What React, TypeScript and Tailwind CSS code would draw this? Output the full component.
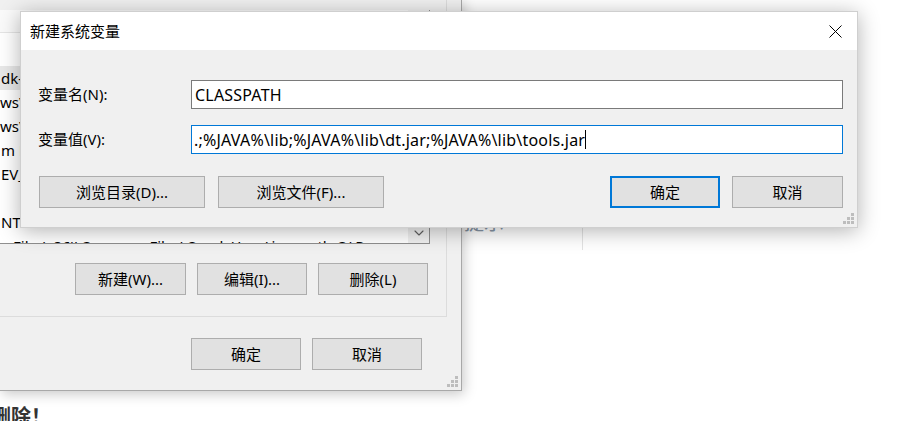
import { ChevronDown } from 'lucide-react'

const ui = "font-['Noto_Sans','Noto_Sans_CJK_SC',sans-serif]"

// values column of the system variable list, clipped at the left edge
const rows = [
  { text: '', pad: 0 },
  { text: 'dk-1.8.0_181', pad: 1, selected: true },
  { text: 'ws\\system32\\cmd.exe', pad: 0 },
  { text: 'ws\\System32\\Drivers\\DriverData', pad: 0 },
  { text: 'm Files\\Java\\jre', pad: 1 },
  { text: 'EV_HOME', pad: 1 },
  { text: '', pad: 0 },
  { text: 'NT', pad: 1 },
  { text: 'File (x86)\\Common Files\\Oracle\\Java\\javapath;C:\\P', pad: 13 },
]

function WinButton({ label, w, focused }: { label: string; w: string; focused?: boolean }) {
  return (
    <div
      className={`${w} h-[32px] flex items-center justify-center bg-[#e1e1e1] text-[15px] text-black ${
        focused ? 'border-2 border-[#0078d7]' : 'border border-[#adadad]'
      }`}
    >
      {label}
    </div>
  )
}

function Grip() {
  return (
    <svg width="12" height="12" viewBox="0 0 12 12">
      {[
        [8, 0],
        [4, 4],
        [8, 4],
        [0, 8],
        [4, 8],
        [8, 8],
      ].map(([x, y]) => (
        <rect key={`${x}-${y}`} x={x} y={y} width="3" height="3" fill="#bdbdbd" />
      ))}
    </svg>
  )
}

function CloseGlyph() {
  return (
    <svg width="13" height="13" viewBox="0 0 13 13">
      <path d="M0.5 0.5L12.5 12.5M12.5 0.5L0.5 12.5" stroke="#000" strokeWidth="1" fill="none" />
    </svg>
  )
}

export default function App() {
  return (
    <div className={`relative w-[911px] h-[421px] overflow-hidden bg-white ${ui}`}>
      {/* page behind the windows */}
      <div className="flex h-full">
        <div className="w-[462px] flex flex-col justify-end">
          <div className="-ml-[9px] mb-[-11px] text-[20px] font-bold text-[#333]">删除！</div>
        </div>
        <div className="flex-1 flex items-start pt-[208px]">
          <span className="text-[20px] text-[#8796a6] pl-[2px]">提示</span>
          <div className="ml-[78px] w-px h-[42px] bg-[#e3e3e3]" />
        </div>
      </div>

      {/* environment variables window */}
      <div className="absolute left-0 top-0 w-[462px] h-[391px] bg-[#f0f0f0] border-r border-b border-[#a8a8a8] shadow-[2px_3px_12px_rgba(0,0,0,0.22)] flex flex-col">
        <div className="w-[447px] h-[317px] border-r border-b border-[#dcdcdc] flex flex-col pt-[10px]">
          <div className="w-[430px] h-[234px] bg-white border-r border-b border-[#8f8f8f] flex overflow-hidden">
            <div className="flex-1 flex flex-col overflow-hidden">
              <div className="h-[23px] shrink-0 bg-[#fafafa] border-b border-[#e5e5e5]" />
              <div className="pt-[9px]">
                {rows.map((r, i) => (
                  <div
                    key={i}
                    className={`h-[24px] flex items-center whitespace-nowrap text-[15px] text-black ${
                      r.selected ? 'bg-[#e8e8e8]' : ''
                    }`}
                    style={{ paddingLeft: r.pad }}
                  >
                    {r.text}
                  </div>
                ))}
              </div>
            </div>
            <div className="w-[21px] bg-[#f0f0f0] flex flex-col justify-end">
              <div className="h-[21px] flex items-center justify-center">
                <ChevronDown size={16} strokeWidth={1.6} className="text-[#606060]" />
              </div>
            </div>
          </div>
          <div className="mt-[19px] flex justify-end gap-[11px] pr-[18px]">
            <WinButton label="新建(W)..." w="w-[111px]" />
            <WinButton label="编辑(I)..." w="w-[110px]" />
            <WinButton label="删除(L)" w="w-[110px]" />
          </div>
        </div>
        <div className="mt-[21px] flex justify-end gap-[11px] pr-[39px]">
          <WinButton label="确定" w="w-[110px]" />
          <WinButton label="取消" w="w-[110px]" />
        </div>
        <div className="mt-auto mb-[2px] mr-[2px] flex justify-end">
          <Grip />
        </div>
      </div>

      {/* new system variable dialog */}
      <div className="absolute left-[20px] top-[11px] w-[838px] h-[217px] border border-[#cfcfcf] shadow-[0_3px_20px_rgba(0,0,0,0.3)] flex flex-col">
        <div className="h-[38px] bg-white flex items-center justify-between">
          <span className="pl-[9px] text-[15px] text-black">新建系统变量</span>
          <div className="w-[43px] h-full flex items-center justify-center">
            <CloseGlyph />
          </div>
        </div>
        <div className="flex-1 bg-[#f0f0f0] flex flex-col pl-[17px] pr-[14px] pt-[30px]">
          <div className="h-[29px] flex items-center">
            <span className="w-[153px] text-[15px] text-black">变量名(N):</span>
            <div className="flex-1 h-full bg-white border border-[#7a7a7a] flex items-center pl-[3px] text-[16px] tracking-[0.2px] text-black">
              CLASSPATH
            </div>
          </div>
          <div className="mt-[16px] h-[29px] flex items-center">
            <span className="w-[153px] text-[15px] text-black">变量值(V):</span>
            <div className="flex-1 h-full bg-white border border-[#0078d7] flex items-center pl-[2px] text-[16px] tracking-[0.2px] text-black whitespace-nowrap">
              .;%JAVA%\lib;%JAVA%\lib\dt.jar;%JAVA%\lib\tools.jar
              <span className="inline-block w-px h-[19px] bg-black" />
            </div>
          </div>
          <div className="mt-[22px] flex items-center">
            <div className="flex gap-[13px] pl-px">
              <WinButton label="浏览目录(D)..." w="w-[166px]" />
              <WinButton label="浏览文件(F)..." w="w-[166px]" />
            </div>
            <div className="ml-auto flex gap-[12px]">
              <WinButton label="确定" w="w-[110px]" focused />
              <WinButton label="取消" w="w-[111px]" />
            </div>
          </div>
          <div className="mt-auto mb-[2px] -mr-[12px] flex justify-end">
            <Grip />
          </div>
        </div>
      </div>
    </div>
  )
}
